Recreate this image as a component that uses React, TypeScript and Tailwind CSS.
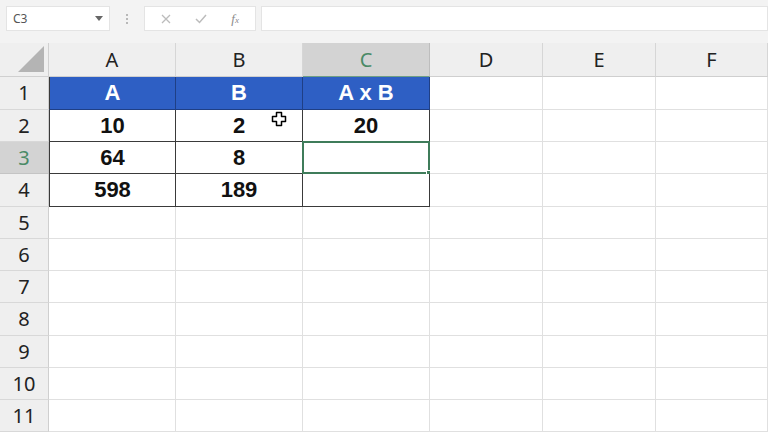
import React from 'react';

const cols = ['A', 'B', 'C', 'D', 'E', 'F'];
const rowHeights = ['h-[33px]', 'h-[32px]', 'h-[32px]', 'h-[33px]', 'h-[32px]', 'h-[32px]', 'h-[32px]', 'h-[33px]', 'h-[32px]', 'h-[32px]', 'h-[32px]'];

const data: Record<string, string> = {
  A1: 'A', B1: 'B', C1: 'A x B',
  A2: '10', B2: '2', C2: '20',
  A3: '64', B3: '8', C3: '',
  A4: '598', B4: '189', C4: '',
};

const MoveCursor = () => (
  <svg width="16" height="16" viewBox="0 0 16 16" className="absolute left-[95px] top-[1px]">
    <path d="M5.5 1.5h5v4h4v5h-4v4h-5v-4h-4v-5h4z" fill="white" stroke="black" strokeWidth="1.5" strokeLinejoin="round" />
  </svg>
);

const Cell = ({ col, row }: { col: string; row: number }) => {
  const key = `${col}${row}`;
  const inTable = row <= 4 && ['A', 'B', 'C'].includes(col);
  const value = data[key] ?? '';
  const isHeader = row === 1 && inTable;
  const selected = key === 'C3';

  let cls = 'relative flex items-center justify-center border-r border-b ';
  if (isHeader) {
    cls += 'bg-[#2e5fc4] border-[#1f3f85] text-white';
  } else if (inTable) {
    cls += 'bg-white border-[#3a3a3a] text-[#111]';
  } else {
    cls += 'bg-white border-[#e0e0e0]';
  }
  if (col === 'A' && inTable) cls += ' border-l border-l-[#3a3a3a]';

  return (
    <div className={cls}>
      {value && (
        <span className="font-['Liberation_Sans',Arial,sans-serif] font-bold text-[22px] leading-none">{value}</span>
      )}
      {key === 'B2' && <MoveCursor />}
      {selected && (
        <div className="absolute -left-px -top-px -right-px -bottom-px border-2 border-[#3f7c5a]">
          <div className="absolute -right-[4px] -bottom-[4px] w-[6px] h-[6px] bg-[#3f7c5a] border border-white" />
        </div>
      )}
    </div>
  );
};

export default function App() {
  return (
    <div className="w-[768px] h-[432px] overflow-hidden bg-[#f3f3f3] font-['Noto_Sans','Open_Sans',sans-serif]">
      {/* formula bar */}
      <div className="h-[43px] flex items-start pt-[6px] pl-[6px] gap-0">
        <div className="w-[104px] h-[25px] bg-white border border-[#e4e4e4] flex items-center justify-between px-[6px]">
          <span className="text-[12px] text-[#555]">C3</span>
          <svg width="8" height="5" viewBox="0 0 8 5"><path d="M0 0h8L4 5z" fill="#666" /></svg>
        </div>
        <div className="w-[34px] h-[25px] flex flex-col items-center justify-center gap-[2px]">
          <span className="w-[2px] h-[2px] bg-[#b8b8b8]" />
          <span className="w-[2px] h-[2px] bg-[#b8b8b8]" />
          <span className="w-[2px] h-[2px] bg-[#b8b8b8]" />
        </div>
        <div className="w-[112px] h-[25px] bg-white border border-[#e4e4e4] flex items-center justify-around px-[4px]">
          <svg width="10" height="10" viewBox="0 0 10 10"><path d="M1 1l8 8M9 1l-8 8" stroke="#bcbcbc" strokeWidth="1.3" /></svg>
          <svg width="12" height="10" viewBox="0 0 12 10"><path d="M1 5l3.5 3.5L11 1" stroke="#bcbcbc" strokeWidth="1.5" fill="none" /></svg>
          <span className="font-['Liberation_Serif',serif] italic text-[13px] text-[#8a8a8a] leading-none">f<span className="text-[9px]">x</span></span>
        </div>
        <div className="ml-[5px] flex-1 h-[25px] bg-white border border-[#e4e4e4]" />
      </div>

      {/* grid */}
      <div className="grid grid-cols-[49px_127px_127px_127px_113px_113px_112px]">
        {/* column header row */}
        <div className="h-[34px] bg-[#efefef] border-r border-b border-[#d0d0d0] relative">
          <svg width="34" height="26" viewBox="0 0 34 26" className="absolute right-[4px] bottom-[4px]">
            <path d="M34 0V26H8z" fill="#b4b4b4" />
          </svg>
        </div>
        {cols.map((c) => (
          <div
            key={c}
            className={
              'h-[34px] flex items-center justify-center text-[20px] leading-none border-r ' +
              (c === 'C'
                ? 'bg-[#d3d3d3] text-[#4a8a66] border-[#bdbdbd] border-b border-b-[#6f9f84]'
                : 'bg-[#efefef] text-[#222] border-[#d6d6d6] border-b border-b-[#cfcfcf]')
            }
          >
            {c}
          </div>
        ))}

        {rowHeights.map((h, i) => {
          const row = i + 1;
          return (
            <React.Fragment key={row}>
              <div
                className={
                  `${h} flex items-center justify-center text-[20px] leading-none border-b border-r ` +
                  (row === 3
                    ? 'bg-[#d3d3d3] text-[#4a8a66] border-[#c4c4c4]'
                    : 'bg-[#efefef] text-[#222] border-[#d8d8d8] border-r-[#cfcfcf]')
                }
              >
                {row}
              </div>
              {cols.map((c) => (
                <Cell key={c} col={c} row={row} />
              ))}
            </React.Fragment>
          );
        })}
      </div>
    </div>
  );
}
